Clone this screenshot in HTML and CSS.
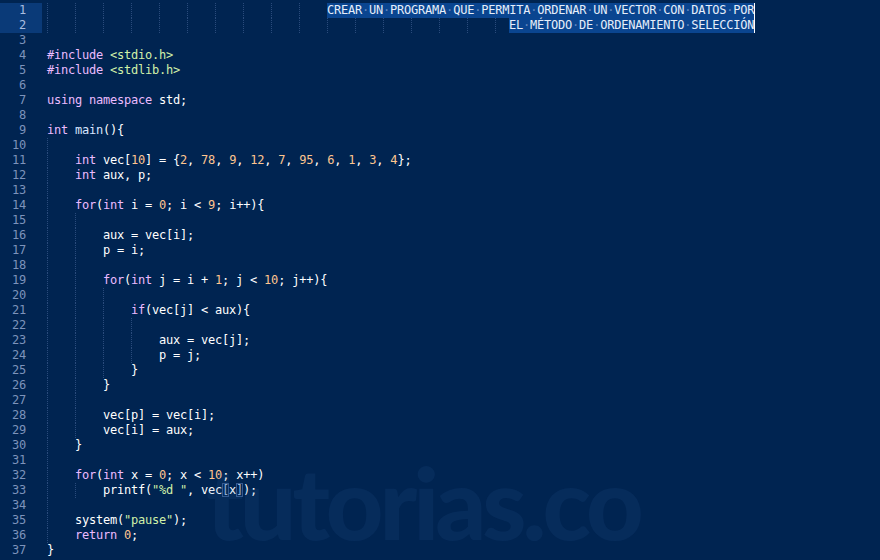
FILE: index.html
```html
<!DOCTYPE html>
<html>
<head>
<meta charset="utf-8">
<link rel="stylesheet" href="styles.css">
</head>
<body>
<div class="editor">
  <div class="row cur"><span class="ln">1</span><span class="code"><span class="ind">                                        </span><span class="sel">CREAR<i>·</i>UN<i>·</i>PROGRAMA<i>·</i>QUE<i>·</i>PERMITA<i>·</i>ORDENAR<i>·</i>UN<i>·</i>VECTOR<i>·</i>CON<i>·</i>DATOS<i>·</i>POR</span><span class="caret"></span></span></div>
  <div class="row cur"><span class="ln">2</span><span class="code"><span class="ind">                                                                  </span><span class="sel">EL<i>·</i>MÉTODO<i>·</i>DE<i>·</i>ORDENAMIENTO<i>·</i>SELECCIÓN</span><span class="caret"></span></span></div>
  <div class="row"><span class="ln">3</span><span class="code"></span></div>
  <div class="row"><span class="ln">4</span><span class="code"><span class="k">#include</span> <span class="s">&lt;stdio.h&gt;</span></span></div>
  <div class="row"><span class="ln">5</span><span class="code"><span class="k">#include</span> <span class="s">&lt;stdlib.h&gt;</span></span></div>
  <div class="row"><span class="ln">6</span><span class="code"></span></div>
  <div class="row"><span class="ln">7</span><span class="code"><span class="k">using</span> <span class="k">namespace</span> std;</span></div>
  <div class="row"><span class="ln">8</span><span class="code"></span></div>
  <div class="row"><span class="ln">9</span><span class="code"><span class="k">int</span> <span class="f">main</span>(){</span></div>
  <div class="row"><span class="ln">10</span><span class="code"><span class="ind">    </span></span></div>
  <div class="row"><span class="ln">11</span><span class="code"><span class="ind">    </span><span class="k">int</span> vec[<span class="n">10</span>] = {<span class="n">2</span>, <span class="n">78</span>, <span class="n">9</span>, <span class="n">12</span>, <span class="n">7</span>, <span class="n">95</span>, <span class="n">6</span>, <span class="n">1</span>, <span class="n">3</span>, <span class="n">4</span>};</span></div>
  <div class="row"><span class="ln">12</span><span class="code"><span class="ind">    </span><span class="k">int</span> aux, p;</span></div>
  <div class="row"><span class="ln">13</span><span class="code"><span class="ind">    </span></span></div>
  <div class="row"><span class="ln">14</span><span class="code"><span class="ind">    </span><span class="k">for</span>(<span class="k">int</span> i = <span class="n">0</span>; i &lt; <span class="n">9</span>; i++){</span></div>
  <div class="row"><span class="ln">15</span><span class="code"><span class="ind">        </span></span></div>
  <div class="row"><span class="ln">16</span><span class="code"><span class="ind">        </span>aux = vec[i];</span></div>
  <div class="row"><span class="ln">17</span><span class="code"><span class="ind">        </span>p = i;</span></div>
  <div class="row"><span class="ln">18</span><span class="code"><span class="ind">        </span></span></div>
  <div class="row"><span class="ln">19</span><span class="code"><span class="ind">        </span><span class="k">for</span>(<span class="k">int</span> j = i + <span class="n">1</span>; j &lt; <span class="n">10</span>; j++){</span></div>
  <div class="row"><span class="ln">20</span><span class="code"><span class="ind">            </span></span></div>
  <div class="row"><span class="ln">21</span><span class="code"><span class="ind">            </span><span class="k">if</span>(vec[j] &lt; aux){</span></div>
  <div class="row"><span class="ln">22</span><span class="code"><span class="ind">                </span></span></div>
  <div class="row"><span class="ln">23</span><span class="code"><span class="ind">                </span>aux = vec[j];</span></div>
  <div class="row"><span class="ln">24</span><span class="code"><span class="ind">                </span>p = j;</span></div>
  <div class="row"><span class="ln">25</span><span class="code"><span class="ind">            </span>}</span></div>
  <div class="row"><span class="ln">26</span><span class="code"><span class="ind">        </span>}</span></div>
  <div class="row"><span class="ln">27</span><span class="code"><span class="ind">        </span></span></div>
  <div class="row"><span class="ln">28</span><span class="code"><span class="ind">        </span>vec[p] = vec[i];</span></div>
  <div class="row"><span class="ln">29</span><span class="code"><span class="ind">        </span>vec[i] = aux;</span></div>
  <div class="row"><span class="ln">30</span><span class="code"><span class="ind">    </span>}</span></div>
  <div class="row"><span class="ln">31</span><span class="code"><span class="ind">    </span></span></div>
  <div class="row"><span class="ln">32</span><span class="code"><span class="ind">    </span><span class="k">for</span>(<span class="k">int</span> x = <span class="n">0</span>; x &lt; <span class="n">10</span>; x++)</span></div>
  <div class="row"><span class="ln">33</span><span class="code"><span class="ind">        </span>printf(<span class="s">"%d "</span>, vec<span class="br">[</span>x<span class="br">]</span>);</span></div>
  <div class="row"><span class="ln">34</span><span class="code"><span class="ind">    </span></span></div>
  <div class="row"><span class="ln">35</span><span class="code"><span class="ind">    </span>system(<span class="s">"pause"</span>);</span></div>
  <div class="row"><span class="ln">36</span><span class="code"><span class="ind">    </span><span class="k">return</span> <span class="n">0</span>;</span></div>
  <div class="row"><span class="ln">37</span><span class="code">}</span></div>
  <div class="watermark">tutorias.co</div>
</div>
</body>
</html>
```

FILE: styles.css
```css
html, body {
  margin: 0;
  padding: 0;
  background: #002451;
}
.editor {
  position: relative;
  width: 880px;
  height: 560px;
  overflow: hidden;
  padding-top: 3px;
  box-sizing: border-box;
  font-family: "DejaVu Sans Mono", "Liberation Mono", monospace;
  font-size: 12px;
  letter-spacing: -0.224px;
  color: #ffffff;
}
.row {
  display: flex;
  height: 15px;
  line-height: 15px;
}
.ln {
  flex: 0 0 42px;
  box-sizing: border-box;
  padding-right: 16px;
  text-align: right;
  color: #7d93bb;
}
.cur .ln {
  background: #0a3a78;
  color: #a9bde0;
}
.code {
  padding-left: 5px;
  white-space: pre;
}
.ind {
  display: inline-block;
  vertical-align: top;
  height: 15px;
  background-image:
    linear-gradient(to bottom, transparent 50%, #002451 50%),
    linear-gradient(to right, #2a4b7c 1px, transparent 1px);
  background-size: 100% 2px, 28px 100%;
}
.sel {
  display: inline-block;
  vertical-align: top;
  height: 15px;
  background: #0a4590;
  color: #e6eefa;
}
.sel i {
  font-style: normal;
  color: #5f84bd;
}
.caret {
  display: inline-block;
  vertical-align: top;
  width: 0;
  height: 15px;
  border-left: 1px solid #ffffff;
}
.k { color: #ebbbff; }
.s { color: #d1f1a9; }
.n { color: #ffc58f; }
.f { color: #d8e6ff; }
.br {
  color: #9fb6da;
  outline: 1px solid #35598e;
  outline-offset: -1px;
}
.watermark {
  position: absolute;
  left: 206px;
  top: 451px;
  font-family: "Lato", "Open Sans", sans-serif;
  font-weight: 900;
  font-size: 100px;
  letter-spacing: -4px;
  line-height: 100px;
  color: rgba(50, 100, 165, 0.13);
  white-space: nowrap;
}
```
